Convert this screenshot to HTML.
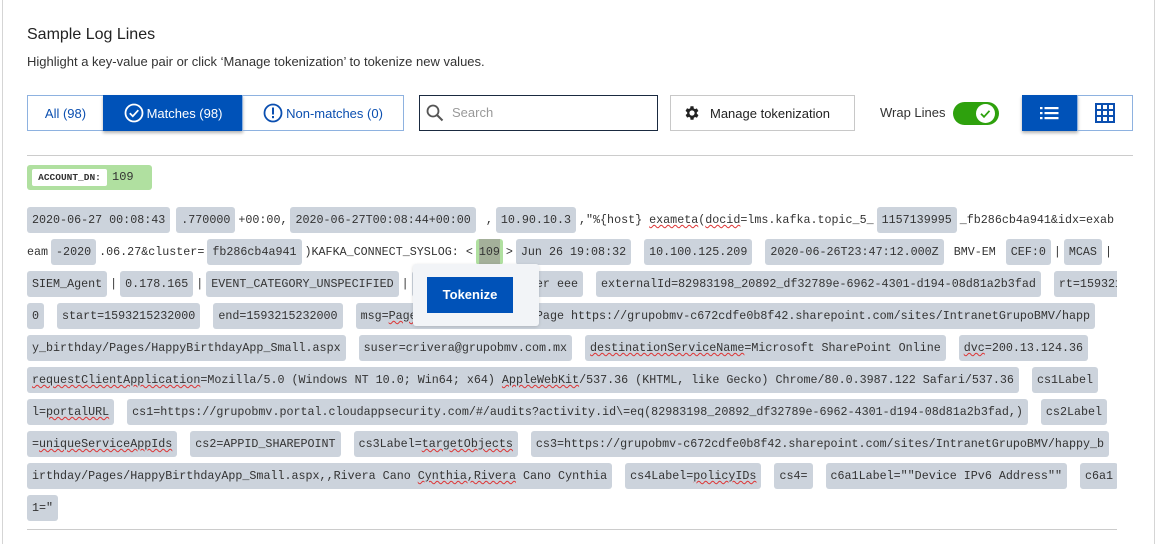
<!DOCTYPE html>
<html><head><meta charset="utf-8"><style>
*{box-sizing:border-box;margin:0;padding:0}
html,body{width:1159px;height:544px;overflow:hidden}
body{background:#fff;font-family:"Liberation Sans",sans-serif;color:#222;position:relative}
.frame{position:absolute;left:2px;top:-2px;width:1153px;height:552px;border:1px solid #d5d5d5}
h1{position:absolute;left:27px;top:26px;font-size:16px;font-weight:normal;color:#222}
.sub{position:absolute;left:27px;top:54px;font-size:13px;color:#333}
.seg{position:absolute;top:95px;height:36px;border:1px solid #8eb2e0;display:flex;align-items:center;justify-content:center;font-size:13px;color:#0b4fb0;gap:3px}
.abs{position:absolute}
.hr{position:absolute;height:1px;background:#ccc}
.lines{position:absolute;left:27px;top:207px;width:1090px;overflow:hidden;font-family:"Liberation Mono","DejaVu Sans Mono",monospace;font-size:11.7px;color:#333}
.ln{height:32px;white-space:pre;line-height:26px}
.p{display:inline-block;background:#ccd3dc;border-radius:3px;padding:0 5px;margin:0 3px;height:26px}
.p0{margin-left:0}
.u{text-decoration:underline wavy #d33;text-decoration-thickness:1px}
</style></head><body>
<div class="frame"></div>
<h1>Sample Log Lines</h1>
<div class="sub">Highlight a key-value pair or click ‘Manage tokenization’ to tokenize new values.</div>

<div class="seg" style="left:27px;width:77px">All (98)</div>
<div class="seg" style="left:103px;width:140px;background:#0052b8;border-color:#0052b8;color:#fff;box-shadow:0 2px 3px rgba(0,0,0,.3)">
<svg width="20" height="20" viewBox="0 0 20 20"><circle cx="10" cy="10" r="8.5" fill="none" stroke="#fff" stroke-width="1.8"/><path d="M5.8 10.2l3 3 5.5-6" fill="none" stroke="#fff" stroke-width="1.8"/></svg>Matches (98)</div>
<div class="seg" style="left:242px;width:162px">
<svg width="20" height="20" viewBox="0 0 20 20"><circle cx="10" cy="10" r="8.5" fill="none" stroke="#0b4fb0" stroke-width="1.8"/><rect x="9" y="4.5" width="2" height="7" fill="#0b4fb0"/><rect x="9" y="13" width="2" height="2.2" fill="#0b4fb0"/></svg>Non-matches (0)</div>

<div class="abs" style="left:419px;top:95px;width:239px;height:36px;border:1px solid #1a2a40"></div>
<svg class="abs" style="left:426px;top:104px" width="18" height="18" viewBox="0 0 18 18"><circle cx="7" cy="7" r="5.5" fill="none" stroke="#555" stroke-width="1.8"/><path d="M11 11l5.5 5.5" stroke="#555" stroke-width="2"/></svg>
<div class="abs" style="left:452px;top:105px;font-size:13px;color:#999">Search</div>

<div class="abs" style="left:670px;top:95px;width:185px;height:36px;border:1px solid #c8c8c8"></div>
<svg class="abs" style="left:683px;top:104px" width="18" height="18" viewBox="0 0 24 24"><path fill="#222" d="M19.4 13a7.5 7.5 0 0 0 0-2l2.1-1.6-2-3.5-2.5 1a7.4 7.4 0 0 0-1.7-1L15 3h-4l-.4 2.7a7.4 7.4 0 0 0-1.7 1l-2.5-1-2 3.5L6.6 11a7.5 7.5 0 0 0 0 2l-2.1 1.6 2 3.5 2.5-1a7.4 7.4 0 0 0 1.7 1L11 21h4l.4-2.7a7.4 7.4 0 0 0 1.7-1l2.5 1 2-3.5zM13 15.5a3.5 3.5 0 1 1 0-7 3.5 3.5 0 0 1 0 7z" transform="translate(-1 0)"/></svg>
<div class="abs" style="left:710px;top:106px;font-size:13px;color:#222">Manage tokenization</div>

<div class="abs" style="left:880px;top:105px;font-size:13px;color:#333">Wrap Lines</div>
<div class="abs" style="left:953px;top:102px;width:46px;height:23px;border-radius:12px;background:#2ea10d"></div>
<div class="abs" style="left:976px;top:104px;width:19px;height:19px;border-radius:50%;background:#fff"></div>
<svg class="abs" style="left:976px;top:104px" width="19" height="19" viewBox="0 0 19 19"><path d="M5 9.8l3 3 5.5-6" fill="none" stroke="#2ea10d" stroke-width="1.8"/></svg>

<div class="abs" style="left:1022px;top:95px;width:56px;height:36px;background:#0052b8;box-shadow:0 2px 3px rgba(0,0,0,.3)"></div>
<svg class="abs" style="left:1040px;top:106px" width="20" height="14" viewBox="0 0 20 14"><g fill="#fff"><rect x="0" y="1" width="2.5" height="2.2"/><rect x="4.5" y="1" width="14" height="2.2"/><rect x="0" y="6" width="2.5" height="2.2"/><rect x="4.5" y="6" width="14" height="2.2"/><rect x="0" y="11" width="2.5" height="2.2"/><rect x="4.5" y="11" width="14" height="2.2"/></g></svg>
<div class="abs" style="left:1077px;top:95px;width:56px;height:36px;border:1px solid #8eb2e0"></div>
<svg class="abs" style="left:1095px;top:103px" width="20" height="20" viewBox="0 0 20 20"><rect x="1" y="1" width="18" height="18" fill="none" stroke="#0b4fb0" stroke-width="2"/><path d="M7 1v18M13 1v18M1 7h18M1 13h18" stroke="#0b4fb0" stroke-width="2"/></svg>

<div class="hr" style="left:27px;top:155px;width:1106px"></div>

<div class="abs" style="left:27px;top:165px;width:125px;height:25px;background:#b0e0a0;border-radius:3px"></div>
<div class="abs" style="left:32px;top:169px;width:75px;height:17px;background:#fff;border-radius:2px;font-family:'Liberation Mono',monospace;font-size:9.5px;font-weight:bold;color:#333;line-height:17px;text-align:center">ACCOUNT_DN:</div>
<div class="abs" style="left:112px;top:169px;font-family:'Liberation Mono',monospace;font-size:12px;color:#333;line-height:17px">109</div>

<div class="lines">
<div class="ln"><span class="p p0">2020-06-27 00:08:43</span><span class="p">.770000</span>+00:00,<span class="p">2020-06-27T00:08:44+00:00</span> ,<span class="p">10.90.10.3</span>,"%{host} <span class="u">exameta</span>(<span class="u">docid</span>=lms.kafka.topic_5_<span class="p">1157139995</span>_fb286cb4a941&amp;idx=exab</div>
<div class="ln">eam<span class="p">-2020</span>.06.27&amp;cluster=<span class="p">fb286cb4a941</span>)KAFKA_CONNECT_SYSLOG: &lt;<span class="p" style="background:#b0e0a0;padding:0 3px"><span style="background:#a4b09a;display:inline-block;height:26px">109</span></span>&gt;<span class="p">Jun 26 19:08:32</span> <span class="p">10.100.125.209</span> <span class="p">2020-06-26T23:47:12.000Z</span> BMV-EM <span class="p">CEF:0</span>|<span class="p">MCAS</span>|</div>
<div class="ln"><span class="p p0">SIEM_Agent</span>|<span class="p">0.178.165</span>|<span class="p">EVENT_CATEGORY_UNSPECIFIED</span>|<span class="p">Page viewed by user eee</span> <span class="p">externalId=82983198_20892_df32789e-6962-4301-d194-08d81a2b3fad</span> <span class="p">rt=1593215232000</span></div>
<div class="ln"><span class="p p0">0</span> <span class="p">start=1593215232000</span> <span class="p">end=1593215232000</span> <span class="p">msg=<span class="u">PageViewed</span> by user.. Page https://grupobmv-c672cdfe0b8f42.sharepoint.com/sites/IntranetGrupoBMV/happ</span></div>
<div class="ln"><span class="p p0">y_birthday/Pages/HappyBirthdayApp_Small.aspx</span> <span class="p">suser=crivera@grupobmv.com.mx</span> <span class="p"><span class="u">destinationServiceName</span>=Microsoft SharePoint Online</span> <span class="p"><span class="u">dvc</span>=200.13.124.36</span></div>
<div class="ln"><span class="p p0"><span class="u">requestClientApplication</span>=Mozilla/5.0 (Windows NT 10.0; Win64; x64) <span class="u">AppleWebKit</span>/537.36 (KHTML, like Gecko) Chrome/80.0.3987.122 Safari/537.36</span> <span class="p">cs1Label</span></div>
<div class="ln"><span class="p p0">l=<span class="u">portalURL</span></span> <span class="p">cs1=https://grupobmv.portal.cloudappsecurity.com/#/audits?activity.id\=eq(82983198_20892_df32789e-6962-4301-d194-08d81a2b3fad,)</span> <span class="p">cs2Label</span></div>
<div class="ln"><span class="p p0">=<span class="u">uniqueServiceAppIds</span></span> <span class="p">cs2=APPID_SHAREPOINT</span> <span class="p">cs3Label=<span class="u">targetObjects</span></span> <span class="p">cs3=https://grupobmv-c672cdfe0b8f42.sharepoint.com/sites/IntranetGrupoBMV/happy_b</span></div>
<div class="ln"><span class="p p0">irthday/Pages/HappyBirthdayApp_Small.aspx,,Rivera Cano <span class="u">Cynthia,Rivera</span> Cano Cynthia</span> <span class="p">cs4Label=<span class="u">policyIDs</span></span> <span class="p">cs4=</span> <span class="p">c6a1Label=""Device IPv6 Address""</span> <span class="p">c6a1</span></div>
<div class="ln"><span class="p p0">1="</span></div>
</div>

<div class="abs" style="left:413px;top:264px;width:126px;height:62px;background:#f2f4f7;border-radius:3px;box-shadow:0 1px 3px rgba(0,0,0,.15)"></div>
<div class="abs" style="left:427px;top:277px;width:86px;height:36px;background:#0052b8;color:#fff;font-size:13px;font-weight:bold;line-height:36px;text-align:center">Tokenize</div>

<div class="hr" style="left:27px;top:529px;width:1090px"></div>
</body></html>
